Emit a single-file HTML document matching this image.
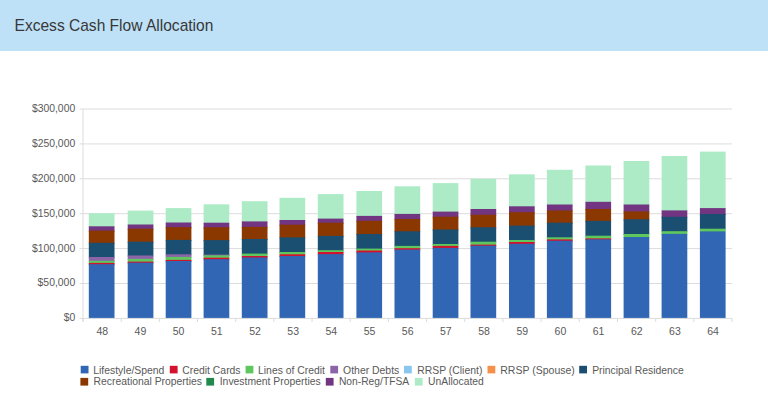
<!DOCTYPE html>
<html><head><meta charset="utf-8"><style>
html,body{margin:0;padding:0;background:#fff;width:768px;height:408px;overflow:hidden}
svg{position:absolute;left:0;top:0}
text{font-family:"Liberation Sans",sans-serif}
</style></head><body>
<svg width="768" height="408" viewBox="0 0 768 408">
<rect x="0" y="0" width="768" height="51" fill="#bee1f7"/>
<text x="14.53" y="30.90" font-size="17" textLength="198.88" lengthAdjust="spacingAndGlyphs" fill="#383838">Excess Cash Flow Allocation</text>
<g><line x1="79.5" y1="283.50" x2="732.0" y2="283.50" stroke="#dcdcdc" stroke-width="1"/><line x1="79.5" y1="248.60" x2="732.0" y2="248.60" stroke="#dcdcdc" stroke-width="1"/><line x1="79.5" y1="213.70" x2="732.0" y2="213.70" stroke="#dcdcdc" stroke-width="1"/><line x1="79.5" y1="178.80" x2="732.0" y2="178.80" stroke="#dcdcdc" stroke-width="1"/><line x1="79.5" y1="143.90" x2="732.0" y2="143.90" stroke="#dcdcdc" stroke-width="1"/><line x1="79.5" y1="109.00" x2="732.0" y2="109.00" stroke="#dcdcdc" stroke-width="1"/></g>
<g><rect x="88.80" y="213.20" width="25.7" height="14.10" fill="#acebc6"/><rect x="88.80" y="226.30" width="25.7" height="5.30" fill="#713581"/><rect x="88.80" y="230.60" width="25.7" height="13.20" fill="#8a3800"/><rect x="88.80" y="242.80" width="25.7" height="15.20" fill="#1b4f72"/><rect x="88.80" y="257.00" width="25.7" height="4.80" fill="#8b65a8"/><rect x="88.80" y="260.80" width="25.7" height="3.10" fill="#5ec85e"/><rect x="88.80" y="262.90" width="25.7" height="2.30" fill="#d5122e"/><rect x="88.80" y="264.20" width="25.7" height="54.20" fill="#3066b4"/><rect x="127.70" y="210.60" width="25.7" height="14.90" fill="#acebc6"/><rect x="127.70" y="224.50" width="25.7" height="5.20" fill="#713581"/><rect x="127.70" y="228.70" width="25.7" height="14.00" fill="#8a3800"/><rect x="127.70" y="241.70" width="25.7" height="14.80" fill="#1b4f72"/><rect x="127.70" y="255.50" width="25.7" height="4.35" fill="#8b65a8"/><rect x="127.70" y="258.85" width="25.7" height="3.75" fill="#5ec85e"/><rect x="127.70" y="261.60" width="25.7" height="2.05" fill="#d5122e"/><rect x="127.70" y="262.65" width="25.7" height="55.75" fill="#3066b4"/><rect x="165.70" y="208.10" width="25.7" height="15.40" fill="#acebc6"/><rect x="165.70" y="222.50" width="25.7" height="5.60" fill="#713581"/><rect x="165.70" y="227.10" width="25.7" height="13.80" fill="#8a3800"/><rect x="165.70" y="239.90" width="25.7" height="15.40" fill="#1b4f72"/><rect x="165.70" y="254.30" width="25.7" height="3.60" fill="#8b65a8"/><rect x="165.70" y="256.90" width="25.7" height="4.00" fill="#5ec85e"/><rect x="165.70" y="259.90" width="25.7" height="2.10" fill="#d5122e"/><rect x="165.70" y="261.00" width="25.7" height="57.40" fill="#3066b4"/><rect x="203.60" y="204.30" width="25.7" height="19.40" fill="#acebc6"/><rect x="203.60" y="222.70" width="25.7" height="5.60" fill="#713581"/><rect x="203.60" y="227.30" width="25.7" height="13.80" fill="#8a3800"/><rect x="203.60" y="240.10" width="25.7" height="15.50" fill="#1b4f72"/><rect x="203.60" y="254.60" width="25.7" height="1.70" fill="#8b65a8"/><rect x="203.60" y="255.30" width="25.7" height="3.40" fill="#5ec85e"/><rect x="203.60" y="257.70" width="25.7" height="2.50" fill="#d5122e"/><rect x="203.60" y="259.20" width="25.7" height="59.20" fill="#3066b4"/><rect x="241.80" y="201.20" width="25.7" height="21.20" fill="#acebc6"/><rect x="241.80" y="221.40" width="25.7" height="6.50" fill="#713581"/><rect x="241.80" y="226.90" width="25.7" height="13.10" fill="#8a3800"/><rect x="241.80" y="239.00" width="25.7" height="15.60" fill="#1b4f72"/><rect x="241.80" y="253.60" width="25.7" height="3.40" fill="#5ec85e"/><rect x="241.80" y="256.00" width="25.7" height="2.45" fill="#d5122e"/><rect x="241.80" y="257.45" width="25.7" height="60.95" fill="#3066b4"/><rect x="279.50" y="197.80" width="25.7" height="23.20" fill="#acebc6"/><rect x="279.50" y="220.00" width="25.7" height="5.70" fill="#713581"/><rect x="279.50" y="224.70" width="25.7" height="13.70" fill="#8a3800"/><rect x="279.50" y="237.40" width="25.7" height="15.60" fill="#1b4f72"/><rect x="279.50" y="252.00" width="25.7" height="3.30" fill="#5ec85e"/><rect x="279.50" y="254.30" width="25.7" height="2.70" fill="#d5122e"/><rect x="279.50" y="256.00" width="25.7" height="62.40" fill="#3066b4"/><rect x="317.80" y="194.10" width="25.7" height="25.50" fill="#acebc6"/><rect x="317.80" y="218.60" width="25.7" height="5.10" fill="#713581"/><rect x="317.80" y="222.70" width="25.7" height="14.20" fill="#8a3800"/><rect x="317.80" y="235.90" width="25.7" height="15.30" fill="#1b4f72"/><rect x="317.80" y="250.20" width="25.7" height="2.80" fill="#5ec85e"/><rect x="317.80" y="252.00" width="25.7" height="3.10" fill="#d5122e"/><rect x="317.80" y="254.10" width="25.7" height="64.30" fill="#3066b4"/><rect x="356.40" y="191.00" width="25.7" height="25.90" fill="#acebc6"/><rect x="356.40" y="215.90" width="25.7" height="5.90" fill="#713581"/><rect x="356.40" y="220.80" width="25.7" height="14.20" fill="#8a3800"/><rect x="356.40" y="234.00" width="25.7" height="15.60" fill="#1b4f72"/><rect x="356.40" y="248.60" width="25.7" height="2.90" fill="#5ec85e"/><rect x="356.40" y="250.50" width="25.7" height="2.90" fill="#d5122e"/><rect x="356.40" y="252.40" width="25.7" height="66.00" fill="#3066b4"/><rect x="394.50" y="186.30" width="25.7" height="28.60" fill="#acebc6"/><rect x="394.50" y="213.90" width="25.7" height="6.10" fill="#713581"/><rect x="394.50" y="219.00" width="25.7" height="13.30" fill="#8a3800"/><rect x="394.50" y="231.30" width="25.7" height="15.60" fill="#1b4f72"/><rect x="394.50" y="245.90" width="25.7" height="3.30" fill="#5ec85e"/><rect x="394.50" y="248.20" width="25.7" height="2.40" fill="#d5122e"/><rect x="394.50" y="249.60" width="25.7" height="68.80" fill="#3066b4"/><rect x="432.70" y="183.10" width="25.7" height="29.50" fill="#acebc6"/><rect x="432.70" y="211.60" width="25.7" height="6.10" fill="#713581"/><rect x="432.70" y="216.70" width="25.7" height="13.80" fill="#8a3800"/><rect x="432.70" y="229.50" width="25.7" height="15.50" fill="#1b4f72"/><rect x="432.70" y="244.00" width="25.7" height="2.90" fill="#5ec85e"/><rect x="432.70" y="245.90" width="25.7" height="3.00" fill="#d5122e"/><rect x="432.70" y="247.90" width="25.7" height="70.50" fill="#3066b4"/><rect x="470.50" y="178.80" width="25.7" height="31.20" fill="#acebc6"/><rect x="470.50" y="209.00" width="25.7" height="6.70" fill="#713581"/><rect x="470.50" y="214.70" width="25.7" height="13.60" fill="#8a3800"/><rect x="470.50" y="227.30" width="25.7" height="15.40" fill="#1b4f72"/><rect x="470.50" y="241.70" width="25.7" height="3.90" fill="#5ec85e"/><rect x="470.50" y="244.60" width="25.7" height="2.05" fill="#d5122e"/><rect x="470.50" y="245.65" width="25.7" height="72.75" fill="#3066b4"/><rect x="509.00" y="174.30" width="25.7" height="33.00" fill="#acebc6"/><rect x="509.00" y="206.30" width="25.7" height="6.90" fill="#713581"/><rect x="509.00" y="212.20" width="25.7" height="14.40" fill="#8a3800"/><rect x="509.00" y="225.60" width="25.7" height="15.40" fill="#1b4f72"/><rect x="509.00" y="240.00" width="25.7" height="3.00" fill="#5ec85e"/><rect x="509.00" y="242.00" width="25.7" height="2.75" fill="#d5122e"/><rect x="509.00" y="243.75" width="25.7" height="74.65" fill="#3066b4"/><rect x="546.90" y="169.80" width="25.7" height="35.70" fill="#acebc6"/><rect x="546.90" y="204.50" width="25.7" height="6.90" fill="#713581"/><rect x="546.90" y="210.40" width="25.7" height="13.30" fill="#8a3800"/><rect x="546.90" y="222.70" width="25.7" height="15.60" fill="#1b4f72"/><rect x="546.90" y="237.30" width="25.7" height="3.10" fill="#5ec85e"/><rect x="546.90" y="239.40" width="25.7" height="2.35" fill="#d5122e"/><rect x="546.90" y="240.75" width="25.7" height="77.65" fill="#3066b4"/><rect x="585.40" y="165.50" width="25.7" height="37.30" fill="#acebc6"/><rect x="585.40" y="201.80" width="25.7" height="8.20" fill="#713581"/><rect x="585.40" y="209.00" width="25.7" height="12.90" fill="#8a3800"/><rect x="585.40" y="220.90" width="25.7" height="15.80" fill="#1b4f72"/><rect x="585.40" y="235.70" width="25.7" height="3.70" fill="#5ec85e"/><rect x="585.40" y="238.40" width="25.7" height="1.90" fill="#d5122e"/><rect x="585.40" y="239.30" width="25.7" height="79.10" fill="#3066b4"/><rect x="623.60" y="161.00" width="25.7" height="44.50" fill="#acebc6"/><rect x="623.60" y="204.50" width="25.7" height="7.90" fill="#713581"/><rect x="623.60" y="211.40" width="25.7" height="8.90" fill="#8a3800"/><rect x="623.60" y="219.30" width="25.7" height="15.70" fill="#1b4f72"/><rect x="623.60" y="234.00" width="25.7" height="4.05" fill="#5ec85e"/><rect x="623.60" y="237.05" width="25.7" height="81.35" fill="#3066b4"/><rect x="661.60" y="156.00" width="25.7" height="55.40" fill="#acebc6"/><rect x="661.60" y="210.40" width="25.7" height="7.40" fill="#713581"/><rect x="661.60" y="216.80" width="25.7" height="15.40" fill="#1b4f72"/><rect x="661.60" y="231.20" width="25.7" height="3.65" fill="#5ec85e"/><rect x="661.60" y="233.85" width="25.7" height="84.55" fill="#3066b4"/><rect x="699.90" y="151.60" width="25.7" height="57.50" fill="#acebc6"/><rect x="699.90" y="208.10" width="25.7" height="6.90" fill="#713581"/><rect x="699.90" y="214.00" width="25.7" height="15.70" fill="#1b4f72"/><rect x="699.90" y="228.70" width="25.7" height="3.70" fill="#5ec85e"/><rect x="699.90" y="231.40" width="25.7" height="87.00" fill="#3066b4"/></g>
<line x1="83" y1="109" x2="83" y2="322" stroke="#dcdcdc"/>
<line x1="79.5" y1="318.4" x2="732.0" y2="318.4" stroke="#dcdcdc"/>
<g><line x1="83.00" y1="318.4" x2="83.00" y2="322" stroke="#dcdcdc"/><line x1="121.18" y1="318.4" x2="121.18" y2="322" stroke="#dcdcdc"/><line x1="159.35" y1="318.4" x2="159.35" y2="322" stroke="#dcdcdc"/><line x1="197.53" y1="318.4" x2="197.53" y2="322" stroke="#dcdcdc"/><line x1="235.71" y1="318.4" x2="235.71" y2="322" stroke="#dcdcdc"/><line x1="273.88" y1="318.4" x2="273.88" y2="322" stroke="#dcdcdc"/><line x1="312.06" y1="318.4" x2="312.06" y2="322" stroke="#dcdcdc"/><line x1="350.24" y1="318.4" x2="350.24" y2="322" stroke="#dcdcdc"/><line x1="388.41" y1="318.4" x2="388.41" y2="322" stroke="#dcdcdc"/><line x1="426.59" y1="318.4" x2="426.59" y2="322" stroke="#dcdcdc"/><line x1="464.76" y1="318.4" x2="464.76" y2="322" stroke="#dcdcdc"/><line x1="502.94" y1="318.4" x2="502.94" y2="322" stroke="#dcdcdc"/><line x1="541.12" y1="318.4" x2="541.12" y2="322" stroke="#dcdcdc"/><line x1="579.29" y1="318.4" x2="579.29" y2="322" stroke="#dcdcdc"/><line x1="617.47" y1="318.4" x2="617.47" y2="322" stroke="#dcdcdc"/><line x1="655.65" y1="318.4" x2="655.65" y2="322" stroke="#dcdcdc"/><line x1="693.82" y1="318.4" x2="693.82" y2="322" stroke="#dcdcdc"/><line x1="732.00" y1="318.4" x2="732.00" y2="322" stroke="#dcdcdc"/></g>
<g font-size="10.5" fill="#595959"><text x="63.69" y="321.30" font-size="10.5" textLength="11.52" lengthAdjust="spacingAndGlyphs">$0</text><text x="37.59" y="286.40" font-size="10.5" textLength="37.62" lengthAdjust="spacingAndGlyphs">$50,000</text><text x="31.89" y="251.50" font-size="10.5" textLength="43.32" lengthAdjust="spacingAndGlyphs">$100,000</text><text x="31.89" y="216.60" font-size="10.5" textLength="43.32" lengthAdjust="spacingAndGlyphs">$150,000</text><text x="31.89" y="181.70" font-size="10.5" textLength="43.32" lengthAdjust="spacingAndGlyphs">$200,000</text><text x="31.89" y="146.80" font-size="10.5" textLength="43.32" lengthAdjust="spacingAndGlyphs">$250,000</text><text x="31.89" y="111.90" font-size="10.5" textLength="43.32" lengthAdjust="spacingAndGlyphs">$300,000</text></g>
<g font-size="10.5" fill="#595959"><text x="102.29" y="335.2" text-anchor="middle">48</text><text x="140.46" y="335.2" text-anchor="middle">49</text><text x="178.64" y="335.2" text-anchor="middle">50</text><text x="216.82" y="335.2" text-anchor="middle">51</text><text x="254.99" y="335.2" text-anchor="middle">52</text><text x="293.17" y="335.2" text-anchor="middle">53</text><text x="331.35" y="335.2" text-anchor="middle">54</text><text x="369.52" y="335.2" text-anchor="middle">55</text><text x="407.70" y="335.2" text-anchor="middle">56</text><text x="445.88" y="335.2" text-anchor="middle">57</text><text x="484.05" y="335.2" text-anchor="middle">58</text><text x="522.23" y="335.2" text-anchor="middle">59</text><text x="560.41" y="335.2" text-anchor="middle">60</text><text x="598.58" y="335.2" text-anchor="middle">61</text><text x="636.76" y="335.2" text-anchor="middle">62</text><text x="674.94" y="335.2" text-anchor="middle">63</text><text x="713.11" y="335.2" text-anchor="middle">64</text></g>
<g fill="#595959"><rect x="80.7" y="365.8" width="7.8" height="7.6" fill="#3066b4"/><text x="93.25" y="373.70" font-size="10.2" textLength="71.17" lengthAdjust="spacingAndGlyphs">Lifestyle/Spend</text><rect x="169.8" y="365.8" width="7.8" height="7.6" fill="#d5122e"/><text x="182.27" y="373.70" font-size="10.2" textLength="58.30" lengthAdjust="spacingAndGlyphs">Credit Cards</text><rect x="245.6" y="365.8" width="7.8" height="7.6" fill="#5ec85e"/><text x="258.05" y="373.70" font-size="10.2" textLength="66.83" lengthAdjust="spacingAndGlyphs">Lines of Credit</text><rect x="330.3" y="365.8" width="7.8" height="7.6" fill="#8b65a8"/><text x="343.11" y="373.70" font-size="10.2" textLength="56.17" lengthAdjust="spacingAndGlyphs">Other Debts</text><rect x="404.0" y="365.8" width="7.8" height="7.6" fill="#88c8f0"/><text x="417.25" y="373.70" font-size="10.2" textLength="65.09" lengthAdjust="spacingAndGlyphs">RRSP (Client)</text><rect x="487.5" y="365.8" width="7.8" height="7.6" fill="#f5914a"/><text x="500.24" y="373.70" font-size="10.2" textLength="74.61" lengthAdjust="spacingAndGlyphs">RRSP (Spouse)</text><rect x="579.2" y="365.8" width="7.8" height="7.6" fill="#1b4f72"/><text x="592.15" y="373.70" font-size="10.2" textLength="91.61" lengthAdjust="spacingAndGlyphs">Principal Residence</text><rect x="80.4" y="377.9" width="7.8" height="7.7" fill="#8a3800"/><text x="93.55" y="385.20" font-size="10.2" textLength="108.43" lengthAdjust="spacingAndGlyphs">Recreational Properties</text><rect x="206.3" y="377.9" width="7.8" height="7.7" fill="#208a4c"/><text x="219.74" y="385.20" font-size="10.2" textLength="100.93" lengthAdjust="spacingAndGlyphs">Investment Properties</text><rect x="325.8" y="377.9" width="7.8" height="7.7" fill="#713581"/><text x="338.96" y="385.20" font-size="10.2" textLength="70.16" lengthAdjust="spacingAndGlyphs">Non-Reg/TFSA</text><rect x="414.8" y="377.9" width="7.8" height="7.7" fill="#acebc6"/><text x="428.10" y="385.20" font-size="10.2" textLength="55.66" lengthAdjust="spacingAndGlyphs">UnAllocated</text></g>
</svg>
</body></html>
